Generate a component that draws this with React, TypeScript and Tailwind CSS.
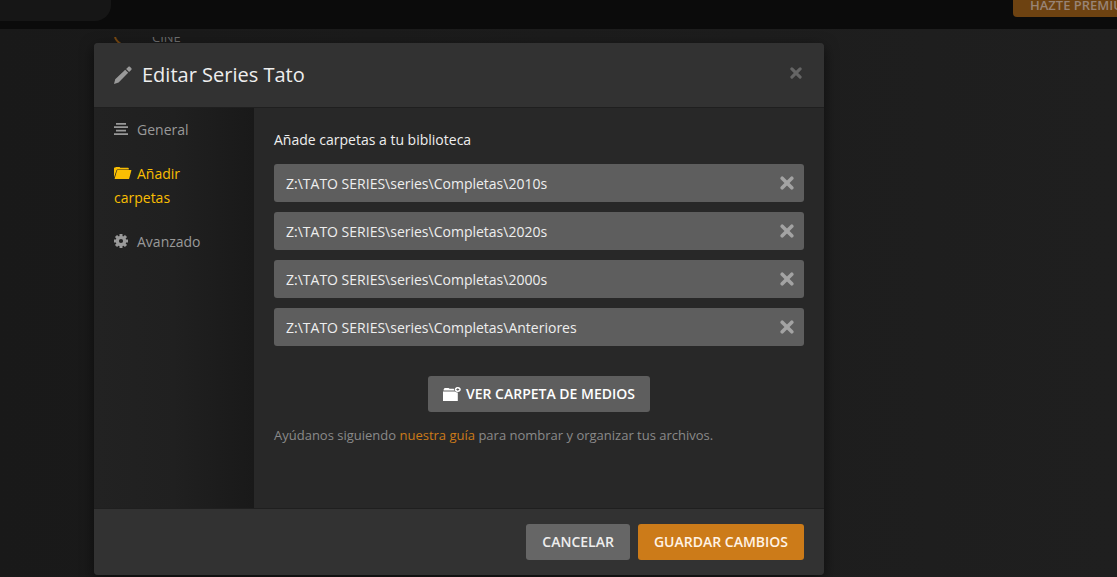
import React from "react";

type IconProps = { className?: string };

function PencilIcon({ className }: IconProps) {
  return (
    <svg viewBox="0 0 18 18" className={className} fill="currentColor" aria-hidden="true">
      <path d="M0 18 L1.2 13.3 L11.2 3.8 L14.2 6.8 L4.6 16.6 Z M12.1 2.9 L14.2 .9 C14.8 .3 15.5 .3 16.1 .9 L17.2 2 C17.8 2.6 17.8 3.3 17.2 3.9 L15.1 5.9 Z" />
    </svg>
  );
}

function CrossIcon({ className }: IconProps) {
  return (
    <svg viewBox="0 0 14 14" className={className} fill="none" stroke="currentColor" strokeWidth="3.6" strokeLinecap="round" aria-hidden="true">
      <path d="M2.2 2.2 L11.8 11.8 M11.8 2.2 L2.2 11.8" />
    </svg>
  );
}

function LinesIcon({ className }: IconProps) {
  return (
    <svg viewBox="0 0 14 12" className={className} fill="currentColor" aria-hidden="true">
      <path d="M2 0h10v1.8H2z M0 3.3h14v1.8H0z M2 6.8h10v1.8H2z M0 10.2h14V12H0z" />
    </svg>
  );
}

function FolderOpenIcon({ className }: IconProps) {
  return (
    <svg viewBox="0 0 18 12" className={className} fill="currentColor" aria-hidden="true">
      <path d="M0 10.5 V1.3 Q0 .6 .7 .6 H1.4 L1.8 0 H5.6 L6.2 .8 H14 Q14.8 .8 14.8 1.6 V2.5 H3.4 Q2.7 2.5 2.5 3.2 Z M3.7 3 H17 Q17.6 3 17.4 3.6 L15.2 11.4 Q15 12 14.4 12 H1 Q.5 12 .7 11.4 L3 3.6 Q3.2 3 3.7 3 Z" />
    </svg>
  );
}

function GearIcon({ className }: IconProps) {
  return (
    <svg viewBox="0 0 14 14" className={className} aria-hidden="true">
      <circle cx="7" cy="7" r="3.7" fill="none" stroke="currentColor" strokeWidth="3.2" />
      <path
        d="M7 0V2.6 M7 11.4V14 M0 7H2.6 M11.4 7H14 M2 2L3.9 3.9 M10.1 10.1L12 12 M12 2L10.1 3.9 M3.9 10.1L2 12"
        stroke="currentColor"
        strokeWidth="3"
      />
    </svg>
  );
}

function FolderAddIcon({ className }: IconProps) {
  return (
    <svg viewBox="0 0 18 14" className={className} fill="currentColor" aria-hidden="true">
      <path d="M.6 3.6 V2.4 L1.6 1 H5.6 L6.6 1.8 H10.8 Q10.9 3 11.5 3.6 Z M0 4.5 H12.2 Q13.4 5.6 14.8 5.4 V14 H0 Z" />
      <path fillRule="evenodd" d="M14.8 0 A3 2.5 0 1 1 14.7 0 Z M14.3 1.2 V2 H13.4 V3 H14.3 V3.8 H15.3 V3 H16.2 V2 H15.3 V1.2 Z" />
    </svg>
  );
}

const sections = [
  { label: "General", icon: <LinesIcon className="mr-[9px] inline h-3 w-[14px] align-baseline" />, active: false },
  { label: "Añadir carpetas", icon: <FolderOpenIcon className="mr-[5px] inline h-3 w-[18px] align-baseline" />, active: true },
  { label: "Avanzado", icon: <GearIcon className="mr-[9px] inline size-[14px] align-[-1px]" />, active: false },
];

const folders = [
  "Z:\\TATO SERIES\\series\\Completas\\2010s",
  "Z:\\TATO SERIES\\series\\Completas\\2020s",
  "Z:\\TATO SERIES\\series\\Completas\\2000s",
  "Z:\\TATO SERIES\\series\\Completas\\Anteriores",
];

export default function App() {
  return (
    <div className="relative min-h-screen overflow-hidden bg-linear-to-r from-[#191919] to-[#1f1f1f] font-['Open_Sans',sans-serif] text-sm text-[#eee]">
      <header className="flex h-[29px] items-start justify-between bg-[#0b0b0b]">
        <div className="h-[21px] w-[111px] rounded-br-2xl bg-[#161616]" />
        <div className="h-[17px] w-[104px] overflow-hidden rounded-bl-sm bg-[#6d4211]">
          <button type="button" className="-mt-[5px] block pl-[17px] text-[13px] leading-5 font-semibold whitespace-nowrap text-[#988475]">
            HAZTE PREMIUM
          </button>
        </div>
      </header>
      <div className="mt-2 flex h-4 items-start gap-6 overflow-hidden pl-[114px] text-[13px] text-[#707070]">
        <svg viewBox="0 0 14 16" className="h-4 w-[14px]" fill="none" stroke="#7a4a12" strokeWidth="2" aria-hidden="true">
          <path d="M1 0 Q2 4 7 7" />
        </svg>
        <span className="-mt-[9px] leading-[18px]">CINE</span>
      </div>

      <div className="absolute inset-0 pt-[43px] pl-[94px]">
        <section
          role="dialog"
          aria-labelledby="dialog-title"
          className="w-full max-w-[730px] overflow-hidden rounded-sm bg-[#282828] shadow-[0_4px_14px_rgba(0,0,0,0.55)]"
        >
          <header className="flex h-16 items-center justify-between bg-[#323232] px-5">
            <h1 id="dialog-title" className="flex items-center gap-[10px] text-xl leading-7">
              <PencilIcon className="size-[18px] text-[#999]" />
              Editar Series Tato
            </h1>
            <button type="button" aria-label="Cerrar" className="p-[2px] pb-[6px] text-[#656565]">
              <CrossIcon className="size-3" />
            </button>
          </header>

          <div className="flex border-y border-[#1f1f1f]">
            <nav className="w-40 shrink-0 bg-linear-to-r from-[#222] via-[#202020] to-[#191919]">
              {sections.map((s) => (
                <a
                  key={s.label}
                  href="#"
                  className={`block py-[10px] pr-10 pl-5 leading-6 ${s.active ? "text-[#f9be03]" : "text-[#999]"}`}
                >
                  {s.icon}
                  {s.label}
                </a>
              ))}
            </nav>
            <div className="flex min-h-[400px] grow flex-col px-5 pt-5">
              <h2 className="leading-6">Añade carpetas a tu biblioteca</h2>
              <ul className="mt-3 flex flex-col gap-[10px]">
                {folders.map((f) => (
                  <li key={f} className="flex h-[38px] items-center justify-between rounded-[3px] bg-[#5e5e5e] pr-[10px] pl-3">
                    <span className="pt-[2px]">{f}</span>
                    <button type="button" aria-label={`Quitar ${f}`} className="text-[#a3a3a3]">
                      <CrossIcon className="size-[14px]" />
                    </button>
                  </li>
                ))}
              </ul>
              <button type="button" className="mt-[30px] flex h-9 items-center gap-[5px] self-center rounded-[3px] bg-[#5e5e5e] px-[15px] font-semibold text-white">
                <FolderAddIcon className="h-[14px] w-[18px]" />
                VER CARPETA DE MEDIOS
              </button>
              <p className="mt-[11px] text-[13px] leading-6 text-[#8a8a8a]">
                Ayúdanos siguiendo{" "}
                <a href="#" className="text-[#cc7b19]">
                  nuestra guía
                </a>{" "}
                para nombrar y organizar tus archivos.
              </p>
            </div>
          </div>

          <footer className="flex justify-end gap-2 bg-[#323232] px-5 py-[15px]">
            <button type="button" className="h-9 rounded-[3px] bg-[#666] px-4 font-semibold text-[#eee]">
              CANCELAR
            </button>
            <button type="button" className="h-9 rounded-[3px] bg-[#cc7b19] px-4 font-semibold text-[#fff3e6]">
              GUARDAR CAMBIOS
            </button>
          </footer>
        </section>
      </div>
    </div>
  );
}
